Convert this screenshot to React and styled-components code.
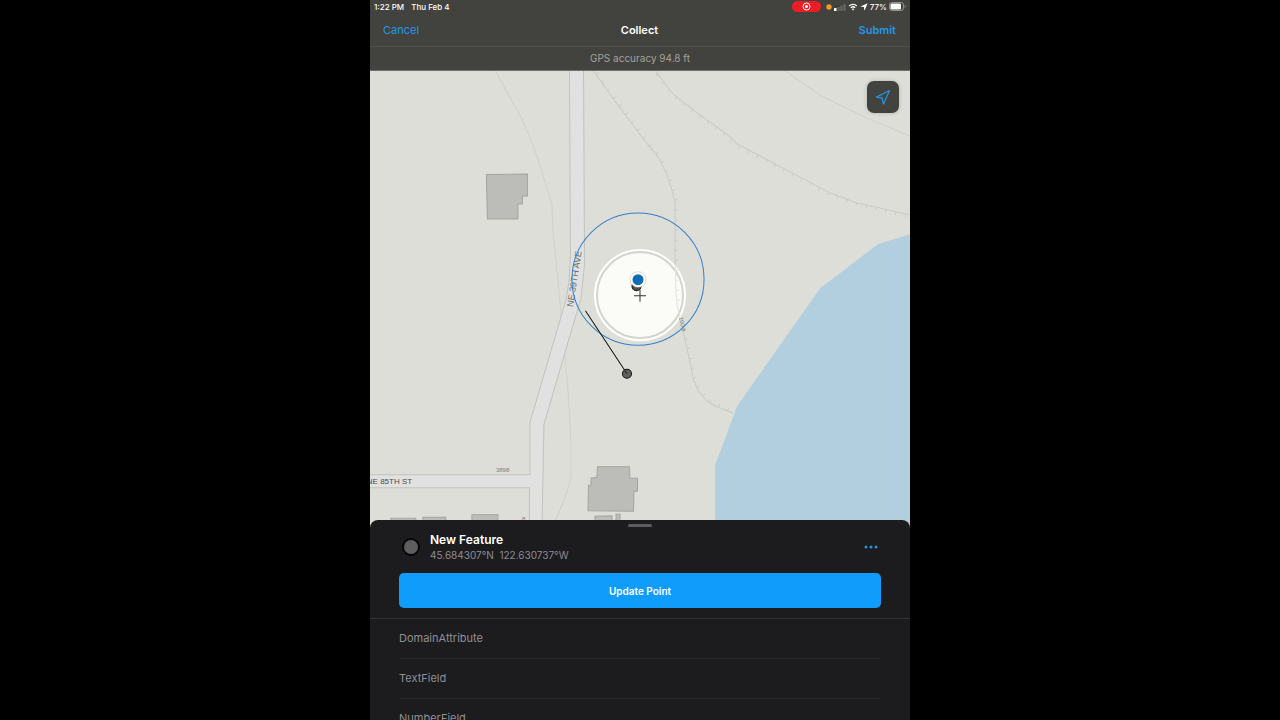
import React from "react";
import styled, { createGlobalStyle } from "styled-components";

const GlobalStyle = createGlobalStyle`
  *, *::before, *::after { box-sizing: border-box; }
  body { margin: 0; background: #000; font-family: Inter, "Liberation Sans", sans-serif; }
  button, input { font: inherit; }
`;

const Stage = styled.div`
  display: flex;
  justify-content: center;
  height: 100vh;
  overflow: hidden;
  background: #000;
`;

const Tablet = styled.main`
  display: flex;
  flex-direction: column;
  width: min(100%, 75vh);
  height: 100%;
  overflow: hidden;
`;

const Header = styled.header`
  position: relative;
  z-index: 1;
  background: #42423e;
  color: #fff;
  border-bottom: 1px solid #6f6f6b;
`;

const StatusBar = styled.div`
  display: flex;
  justify-content: space-between;
  align-items: center;
  height: 13px;
  padding: 0 4px;
  font-size: 8px;
  font-weight: 500;
  line-height: 12px;
`;

const StatusGroup = styled.div`
  display: flex;
  align-items: center;
  gap: ${(p) => p.$gap}px;
`;

const RecordPill = styled.span`
  display: flex;
  align-items: center;
  justify-content: center;
  width: 29px;
  height: 11px;
  margin-right: 3px;
  border-radius: 6px;
  background: #ee1c25;
`;

const NavBar = styled.nav`
  display: grid;
  grid-template-columns: 1fr auto 1fr;
  align-items: center;
  height: 34px;
  padding: 0 14px 0 13px;
  border-bottom: 1px solid #50504c;
`;

const NavButton = styled.button`
  justify-self: ${(p) => (p.$end ? "end" : "start")};
  padding: 0;
  border: 0;
  background: none;
  color: #2498e8;
  font-size: 11px;
  font-weight: ${(p) => (p.$end ? 600 : 400)};
  line-height: 16px;
`;

const Title = styled.h1`
  margin: 0;
  font-size: 11px;
  font-weight: 600;
  line-height: 16px;
`;

const Accuracy = styled.p`
  margin: 0;
  color: #a2a29f;
  font-size: 10px;
  line-height: 23px;
  text-align: center;
`;

const MapArea = styled.section`
  position: relative;
  flex: 9 1 8px;
  min-height: 0;
  margin-bottom: -8px;
  background: #ddded8;
`;

const MapCanvas = styled.svg`
  display: block;
  width: 100%;
  height: 100%;
  font-family: "Liberation Sans", Arial, sans-serif;
`;

const LocateButton = styled.button`
  position: absolute;
  top: 10px;
  right: 11px;
  display: grid;
  place-items: center;
  width: 32px;
  height: 32px;
  padding: 0;
  border: 0;
  border-radius: 7px;
  background: #42423e;
  box-shadow: 0 0 4px rgba(0, 0, 0, 0.2);
`;

const Sheet = styled.section`
  position: relative;
  flex: 4 1 0;
  min-height: 0;
  overflow: hidden;
  border-radius: 8px 8px 0 0;
  background: #1c1c1e;
`;

const Grabber = styled.div`
  width: 24px;
  height: 3px;
  margin: 4px auto 0;
  border-radius: 2px;
  background: #5b5b5f;
`;

const Feature = styled.div`
  display: flex;
  align-items: center;
  height: 46px;
  padding: 0 30px 6px 32px;
`;

const Symbol = styled.span`
  width: 18px;
  height: 18px;
  margin-right: 10px;
  border: 2px solid #060606;
  border-radius: 50%;
  background: #5e5e5e;
`;

const FeatureText = styled.div`
  flex: 1;
`;

const FeatureName = styled.h2`
  margin: 0;
  color: #fff;
  font-size: 12px;
  font-weight: 600;
  line-height: 16px;
`;

const Coordinates = styled.p`
  margin: 0;
  color: #8d8d92;
  font-size: 10px;
  line-height: 14px;
  white-space: pre;
`;

const MoreButton = styled.button`
  display: grid;
  place-items: center;
  width: 18px;
  height: 18px;
  padding: 0;
  border: 0;
  background: none;
`;

const Action = styled.div`
  padding: 0 29px 10px;
  border-bottom: 1px solid #303032;
`;

const UpdateButton = styled.button`
  display: block;
  width: 100%;
  height: 35px;
  padding: 0;
  border: 0;
  border-radius: 5px;
  background: #109cfb;
  color: #fff;
  font-size: 10px;
  font-weight: 600;
`;

const Form = styled.form`
  padding: 0 29px;
`;

const Field = styled.label`
  display: flex;
  align-items: center;
  height: 40px;
  padding-bottom: 1px;
  border-bottom: 1px solid #29292b;
  color: #8f8f94;
  font-size: 11px;
`;

const FieldInput = styled.input`
  flex: 1;
  min-width: 0;
  border: 0;
  outline: 0;
  background: transparent;
  color: #fff;
`;

const slopeWest = [[593, 70], [612, 97], [633, 125], [645, 141], [659, 158], [667, 175], [672, 190], [675, 203], [675, 260], [675, 285], [677, 305], [684, 335], [690, 362], [693, 378], [698, 390], [707, 401], [716, 406], [733, 413]];
const slopeEast = [[655, 70], [672, 93], [683, 102], [700, 115], [728, 135], [737, 144], [760, 156], [800, 177], [830, 193], [857, 203], [880, 208], [910, 215]];

// Short marks at a regular spacing on one side of a slope line.
function slopeTicks(points, side, step = 10, length = 3) {
  let d = "";
  let next = step / 2;
  for (let i = 1; i < points.length; i++) {
    const [x0, y0] = points[i - 1];
    const dx = points[i][0] - x0;
    const dy = points[i][1] - y0;
    const run = Math.hypot(dx, dy);
    for (; next < run; next += step) {
      const x = x0 + (dx * next) / run;
      const y = y0 + (dy * next) / run;
      d += `M${x} ${y}l${(side * dy * length) / run} ${(-side * dx * length) / run}`;
    }
    next -= run;
  }
  return d;
}

function Slope({ points, side }) {
  return (
    <g fill="none" stroke="#cbcbc6">
      <polyline points={points.join(" ")} />
      <path d={slopeTicks(points, side)} />
    </g>
  );
}

function SiteMap() {
  return (
    <MapCanvas viewBox="370 71 540 457" preserveAspectRatio="xMidYMid slice" role="img" aria-label="Map">
      <path d="M910 234L878 244L820 288L737 406L715 465V530H910Z" fill="#b2cfdf" />
      <g fill="none" stroke="#d1d1cc">
        <path d="M495 70L507 92L523 121L534 147L543 175L552 204L553 230L557 270L564 345L568 390L571 440V478L567 492L556 520" />
        <path d="M784 70L821 96L867 118L910 136" />
      </g>
      <Slope points={slopeWest} side={1} />
      <Slope points={slopeEast} side={-1} />
      <path
        d="M569.5 65L570.5 255L569 282L566 300L530 422V474.5H360V487.5H529.5V530H542L544 424L581 298L584.5 265V240L583.5 65Z"
        fill="#e1e1e2"
        stroke="#c2c2be"
      />
      <g fill="#bcbdb8" stroke="#a4a5a0">
        <path d="M486.500 174.500L527.500 174V196H522.500V204H518V219H487.500Z" />
        <path d="M597.500 466.500H629.500L630 478H637.500V491H634L633.500 511L588 510.500L588.500 485H591V478L597 477Z" />
        <path d="M391 518H416V530H391ZM423 517H446V530H423ZM472 514.500H498V530H472ZM595 516L612 515.500V530H595ZM616 514H620V530H616Z" />
      </g>
      <text x="367" y="484" fontSize="8" fill="#4c4c4c">NE 85TH ST</text>
      <text x="496" y="472" fontSize="6" fill="#7d7d7a">3898</text>
      <text x="522" y="521" fontSize="6" fill="#7d7d7a">8</text>
      <text transform="translate(573 307) rotate(-81)" fontSize="9" fill="#6d6d6f">NE 39TH AVE</text>
      <circle cx="640" cy="295" r="43" fill="#fdfef9" fillOpacity="0.94" stroke="#d3d4ce" strokeWidth="2" />
      <circle cx="640" cy="295" r="45" fill="none" stroke="#fefefc" strokeWidth="2" />
      <path d="M675.500 265V285L677 305L681 321M675.500 270H678M675.500 280H678M676 290H679M677 300H680" fill="none" stroke="#e3e3de" />
      <text transform="translate(679 317) rotate(79)" fontSize="6" fill="#858581">160 ft</text>
      <circle cx="638" cy="279" r="66" fill="none" stroke="#3580c9" />
      <path d="M585.500 310.500L627 373.500" stroke="#111" />
      <circle cx="627" cy="373.500" r="4.500" fill="#606060" stroke="#111" />
      <path d="M625 370.500L627 373.500" stroke="#222" />
      <circle cx="636.500" cy="286" r="4.500" fill="#4e4e4e" stroke="#111" />
      <circle cx="638" cy="279.500" r="8.500" fill="#aaa" opacity="0.35" />
      <circle cx="638" cy="279.500" r="7.500" fill="#fff" />
      <circle cx="638" cy="279.500" r="5.500" fill="#0d6eb7" />
      <path d="M634 295.500H646M640 289.500V301.500" stroke="#333" />
    </MapCanvas>
  );
}

function StatusIcons() {
  return (
    <StatusGroup $gap={2}>
      <RecordPill>
        <svg width="9" height="9" viewBox="0 0 9 9" aria-label="Recording">
          <circle cx="4.500" cy="4.500" r="3.500" fill="none" stroke="#fff" />
          <circle cx="4.500" cy="4.500" r="1.500" fill="#fff" />
        </svg>
      </RecordPill>
      <svg width="6" height="6" viewBox="0 0 6 6"><circle cx="3" cy="3" r="2.700" fill="#f29a1f" /></svg>
      <svg width="12" height="8" viewBox="0 0 12 8">
        <rect y="5" width="2.500" height="3" rx=".5" fill="#fff" />
        <path d="M3.500 4H5.500V8H3.500ZM6.500 2.500H8.500V8H6.500ZM9.500 1H11.500V8H9.500Z" fill="#686864" />
      </svg>
      <svg width="10" height="8" viewBox="0 0 18 16" fill="none" stroke="#fff" strokeWidth="2.600">
        <path d="M1.500 6A10.500 10.500 0 0 1 16.500 6M4.800 9.500A6 6 0 0 1 13.200 9.500" />
        <path d="M6.500 12A3.700 3.700 0 0 1 11.500 12L9 14.800Z" fill="#fff" stroke="none" />
      </svg>
      <svg width="8" height="8" viewBox="0 0 7 7"><path d="M6.700 .3L3.900 6.700L3.400 3.600L.3 3.100Z" fill="#fff" /></svg>
      <span>77%</span>
      <svg width="17" height="9" viewBox="0 0 17 9">
        <rect x=".5" y=".5" width="14" height="8" rx="2.300" fill="none" stroke="#91918e" />
        <rect x="1.500" y="1.500" width="10.500" height="6" rx="1.300" fill="#fff" />
        <path d="M15.700 3C17 3.400 17 5.600 15.700 6Z" fill="#91918e" />
      </svg>
    </StatusGroup>
  );
}

const fields = ["DomainAttribute", "TextField", "NumberField"];

export default function App() {
  return (
    <Stage>
      <GlobalStyle />
      <Tablet>
        <Header>
          <StatusBar>
            <StatusGroup $gap={7}>
              <span>1:22 PM</span>
              <span>Thu Feb 4</span>
            </StatusGroup>
            <StatusIcons />
          </StatusBar>
          <NavBar>
            <NavButton type="button">Cancel</NavButton>
            <Title>Collect</Title>
            <NavButton type="button" $end>Submit</NavButton>
          </NavBar>
          <Accuracy>GPS accuracy 94.8 ft</Accuracy>
        </Header>
        <MapArea>
          <SiteMap />
          <LocateButton type="button" aria-label="Show my location">
            <svg width="16" height="16" viewBox="0 0 16 16" fill="none" stroke="#2a91dc" strokeWidth="1.300" strokeLinejoin="round">
              <path d="M14.500 1.500L8.500 15L7 9L1.300 8.200Z" />
            </svg>
          </LocateButton>
        </MapArea>
        <Sheet>
          <Grabber />
          <Feature>
            <Symbol />
            <FeatureText>
              <FeatureName>New Feature</FeatureName>
              <Coordinates>{"45.684307°N  122.630737°W"}</Coordinates>
            </FeatureText>
            <MoreButton type="button" aria-label="More actions">
              <svg width="14" height="4" viewBox="0 0 14 4" fill="#2d91d8">
                <circle cx="2" cy="2" r="1.500" />
                <circle cx="7" cy="2" r="1.500" />
                <circle cx="12" cy="2" r="1.500" />
              </svg>
            </MoreButton>
          </Feature>
          <Action>
            <UpdateButton type="button">Update Point</UpdateButton>
          </Action>
          <Form>
            {fields.map((name) => (
              <Field key={name}>
                {name}
                <FieldInput name={name} />
              </Field>
            ))}
          </Form>
        </Sheet>
      </Tablet>
    </Stage>
  );
}
